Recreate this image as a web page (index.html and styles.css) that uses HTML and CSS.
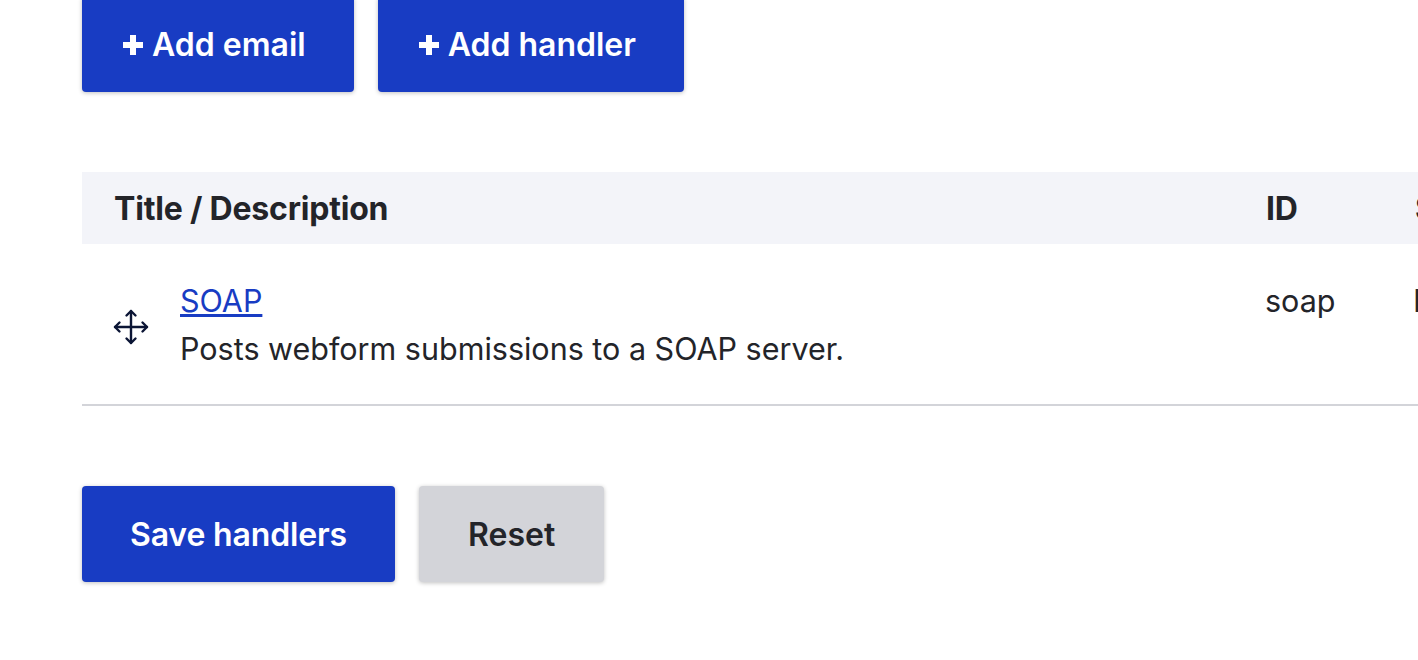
FILE: index.html
```html
<!DOCTYPE html>
<html lang="en">
<head>
    <meta charset="UTF-8">
    <meta name="viewport" content="width=device-width, initial-scale=1.0">
    <title>Webform handlers</title>
    <link rel="stylesheet" href="styles.css">
</head>
<body>
    <div class="page">
        <div class="actions actions-top">
            <a class="button button-primary button-add" href="#">
                <svg class="plus" width="20" height="20" viewBox="0 0 20 20" fill="#fff"><path d="M7 0h6v7h7v6h-7v7H7v-7H0V7h7z"/></svg>
                Add email
            </a>
            <a class="button button-primary button-add" href="#">
                <svg class="plus" width="20" height="20" viewBox="0 0 20 20" fill="#fff"><path d="M7 0h6v7h7v6h-7v7H7v-7H0V7h7z"/></svg>
                Add handler
            </a>
        </div>

        <table class="handlers">
            <thead>
                <tr>
                    <th class="col-title">Title / Description</th>
                    <th class="col-id">ID</th>
                    <th class="col-summary">Summary</th>
                </tr>
            </thead>
            <tbody>
                <tr>
                    <td class="col-title">
                        <div class="handler">
                            <svg class="drag-icon" width="36" height="36" viewBox="0 0 36 36" fill="none" stroke="#0b1535" stroke-width="2.400" stroke-linecap="round" stroke-linejoin="round">
                                <path d="M18 2v32M2 18h32"/>
                                <path d="M13.500 6.500 18 2l4.500 4.500M13.500 29.500 18 34l4.500-4.500M6.500 13.500 2 18l4.500 4.500M29.500 13.500 34 18l-4.500 4.500"/>
                            </svg>
                            <div class="handler-text">
                                <a href="#">SOAP</a>
                                <div>Posts webform submissions to a SOAP server.</div>
                            </div>
                        </div>
                    </td>
                    <td class="col-id">soap</td>
                    <td class="col-summary">Endpoint</td>
                </tr>
            </tbody>
        </table>

        <div class="actions actions-bottom">
            <a class="button button-primary" href="#">Save handlers</a>
            <a class="button button-secondary" href="#">Reset</a>
        </div>
    </div>
</body>
</html>
```

FILE: styles.css
```css
html, body {
    margin: 0;
    padding: 0;
    height: 660px;
    overflow: hidden;
    background: #fff;
}

body {
    font-family: Inter, "Liberation Sans", sans-serif;
    font-size: 30.5px;
    line-height: 48px;
    color: #232429;
}

.page {
    padding-left: 82px;
}

.actions {
    display: flex;
    gap: 24px;
}

.actions-top {
    margin-top: -4px;
}

.actions-bottom {
    margin-top: 80px;
}

.button {
    display: block;
    box-sizing: border-box;
    height: 96px;
    line-height: 94px;
    padding: 2px 48px 0;
    border-radius: 4px;
    font-size: 32px;
    font-weight: 600;
    letter-spacing: -0.15px;
    text-decoration: none;
    box-shadow: 0 1px 4px rgba(0, 0, 0, 0.25);
}

.button-add {
    display: flex;
    align-items: center;
    gap: 9px;
    padding-left: 41px;
    letter-spacing: 0;
}

.button-primary {
    background: #183cc3;
    color: #fff;
}

.button-secondary {
    padding-left: 49px;
    padding-right: 49px;
    background: #d3d4d9;
    color: #232429;
    letter-spacing: 0;
}

.plus {
    flex: none;
}

.handlers {
    width: 1502px;
    margin-top: 80px;
    border-collapse: collapse;
    table-layout: fixed;
}

.handlers th {
    box-sizing: border-box;
    height: 72px;
    padding: 2px 32px 0;
    background: #f3f4f9;
    font-size: 32px;
    font-weight: 700;
    letter-spacing: -0.2px;
    text-align: left;
}

.handlers td {
    padding: 33px 32px 31px;
    border-bottom: 2px solid #d3d4d9;
    vertical-align: top;
}

.col-id {
    width: 150px;
}

.col-summary {
    width: 200px;
}

.handlers th.col-summary {
    padding-left: 31px;
}

.handlers td.col-id {
    padding-left: 31px;
}

.handlers td.col-summary {
    padding-left: 29px;
}

.handler {
    display: flex;
    align-items: center;
    gap: 31px;
}

.drag-icon {
    flex: none;
    margin: 4px 0 0 -1px;
}

.handler-text a {
    color: #183cc3;
}
```
